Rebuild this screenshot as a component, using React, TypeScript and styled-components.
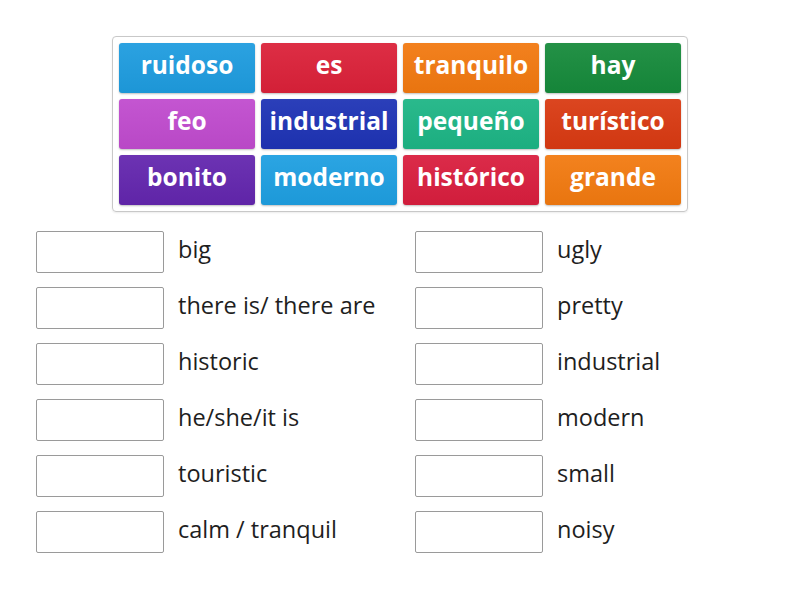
import React from "react";
import styled, { createGlobalStyle } from "styled-components";

const Global = createGlobalStyle`
  html, body { margin: 0; padding: 0; background: #fff; }
  body { font-family: "Open Sans", "Liberation Sans", sans-serif; }
`;

const Page = styled.div`
  width: 800px;
  height: 600px;
  display: flex;
  flex-direction: column;
  align-items: center;
  padding-top: 36px;
  box-sizing: border-box;
`;

const Board = styled.div`
  display: grid;
  grid-template-columns: repeat(4, 136px);
  grid-auto-rows: 50px;
  column-gap: 6px;
  row-gap: 6px;
  padding: 6px;
  border: 1px solid #c8c8c8;
  border-radius: 4px;
  box-shadow: 0 1px 2px rgba(0,0,0,0.08);
`;

const Tile = styled.div<{ $c: string }>`
  background: ${(p) => p.$c};
  background-image: linear-gradient(180deg, rgba(255,255,255,0.06), rgba(0,0,0,0.04));
  border-radius: 3px;
  box-shadow: 0 1px 2px rgba(0,0,0,0.25);
  color: #fff;
  font-weight: 700;
  font-size: 24.5px;
  display: flex;
  align-items: center;
  justify-content: center;
  padding-bottom: 7px;
  box-sizing: border-box;
`;

const Answers = styled.div`
  align-self: stretch;
  margin-top: 19px;
  padding-left: 36px;
  display: grid;
  grid-template-columns: 379px 379px;
  grid-auto-flow: column;
  grid-template-rows: repeat(6, 42px);
  row-gap: 14px;
`;

const Row = styled.div`
  display: flex;
  align-items: center;
  gap: 14px;
`;

const Box = styled.div`
  width: 128px;
  height: 42px;
  box-sizing: border-box;
  border: 1px solid #9a9a9a;
  border-radius: 2px;
  flex: none;
`;

const Label = styled.div`
  font-size: 23.5px;
  color: #1e1e1e;
  padding-bottom: 6px;
`;

const tiles: [string, string][] = [
  ["ruidoso", "#1e9cdf"],
  ["es", "#db2139"],
  ["tranquilo", "#f27910"],
  ["hay", "#168a3b"],
  ["feo", "#c04bce"],
  ["industrial", "#1e33b5"],
  ["pequeño", "#1db585"],
  ["turístico", "#d93a12"],
  ["bonito", "#6326ae"],
  ["moderno", "#1e9fe1"],
  ["histórico", "#d91e3e"],
  ["grande", "#f27a10"],
];

const answers = [
  "big",
  "there is/ there are",
  "historic",
  "he/she/it is",
  "touristic",
  "calm / tranquil",
  "ugly",
  "pretty",
  "industrial",
  "modern",
  "small",
  "noisy",
];

export default function App() {
  return (
    <>
      <Global />
      <Page>
        <Board>
          {tiles.map(([t, c]) => (
            <Tile key={t} $c={c}>
              {t}
            </Tile>
          ))}
        </Board>
        <Answers>
          {answers.map((a) => (
            <Row key={a}>
              <Box />
              <Label>{a}</Label>
            </Row>
          ))}
        </Answers>
      </Page>
    </>
  );
}
